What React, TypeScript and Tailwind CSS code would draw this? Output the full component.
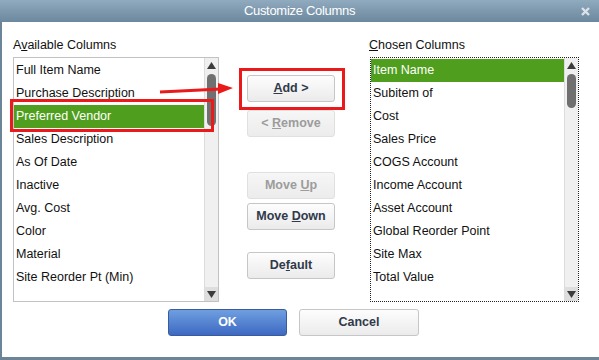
import React from 'react';

const available = [
  'Full Item Name',
  'Purchase Description',
  'Preferred Vendor',
  'Sales Description',
  'As Of Date',
  'Inactive',
  'Avg. Cost',
  'Color',
  'Material',
  'Site Reorder Pt (Min)',
];

const chosen = [
  'Item Name',
  'Subitem of',
  'Cost',
  'Sales Price',
  'COGS Account',
  'Income Account',
  'Asset Account',
  'Global Reorder Point',
  'Site Max',
  'Total Value',
];

// fake scrollbar, thumb offset/height in px
const ScrollBar: React.FC<{ thumbTop: number; thumbH: number }> = ({ thumbTop, thumbH }) => (
  <div className="w-[14px] h-full bg-[#f0f0f0] border-l border-[#dcdcdc] flex flex-col items-center">
    <div className="h-[14px] w-full flex items-center justify-center">
      <svg width="9" height="7" viewBox="0 0 9 7"><polygon points="4.5,0 9,7 0,7" fill="#3c3c3c" /></svg>
    </div>
    <div className="flex-1 w-full flex flex-col items-center">
      <div className="w-[9px] rounded-[5px] bg-[#707070]" style={{ marginTop: thumbTop, height: thumbH }} />
    </div>
    <div className="h-[14px] w-full flex items-center justify-center bg-[#dedede]">
      <svg width="9" height="7" viewBox="0 0 9 7"><polygon points="0,0 9,0 4.5,7" fill="#3c3c3c" /></svg>
    </div>
  </div>
);

const ListBox: React.FC<{ items: string[]; selected: number; focused?: boolean; thumbTop: number; thumbH: number }> = ({
  items,
  selected,
  focused,
  thumbTop,
  thumbH,
}) => (
  <div
    className={
      focused
        ? 'h-[245px] flex bg-white border border-dotted border-[#222]'
        : 'h-[245px] flex bg-white border border-[#c2c2c2]'
    }
  >
    <div className="flex-1 pt-[1px] overflow-hidden">
      {items.map((it, i) => (
        <div
          key={it}
          className={
            i === selected
              ? 'h-[23px] leading-[23px] pl-[2px] bg-[#4f9e1d] text-white whitespace-nowrap'
              : 'h-[23px] leading-[23px] pl-[2px] text-[#111] whitespace-nowrap'
          }
        >
          {it}
        </div>
      ))}
    </div>
    <ScrollBar thumbTop={thumbTop} thumbH={thumbH} />
  </div>
);

const Btn: React.FC<{ children: React.ReactNode; disabled?: boolean }> = ({ children, disabled }) => (
  <div
    className={
      disabled
        ? 'h-[27px] w-[88px] flex items-center justify-center rounded-[3px] border border-[#e0e0e0] bg-gradient-to-b from-[#f6f6f6] to-[#ececec] text-[#9c9c9c] font-bold'
        : 'h-[27px] w-[88px] flex items-center justify-center rounded-[3px] border border-[#c6c6c6] bg-gradient-to-b from-[#fdfdfd] to-[#ebebeb] text-[#303a4a] font-bold'
    }
  >
    <span className="whitespace-pre">{children}</span>
  </div>
);

export default function App() {
  return (
    <div
      className="relative w-[599px] h-[360px] flex flex-col bg-white text-[12.5px]"
      style={{ fontFamily: '"Liberation Sans", Arial, sans-serif' }}
    >
      {/* title bar */}
      <div className="h-[22px] shrink-0 flex items-center justify-center bg-gradient-to-b from-[#90aabe] to-[#6c889e] text-white text-[13px] relative">
        <span className="tracking-[-0.3px]">Customize Columns</span>
        <svg className="absolute right-[9px] top-[7px]" width="9" height="9" viewBox="0 0 9 9">
          <path d="M1 1 L8 8 M8 1 L1 8" stroke="#dbe2e8" strokeWidth="2.4" />
        </svg>
      </div>

      <div className="flex-1 flex flex-col border-l-2 border-b-[3px] border-[#6b8498]">
        <div className="flex pl-[11px] pt-[14px]">
          {/* left column */}
          <div className="w-[206px] flex flex-col">
            <div className="h-[21px] text-[#111]">
              A<span className="underline">v</span>ailable Columns
            </div>
            <ListBox items={available} selected={2} thumbTop={2} thumbH={52} />
          </div>

          {/* middle buttons */}
          <div className="w-[88px] ml-[28px] pt-[39px] flex flex-col">
            <Btn>
              <span className="underline">A</span>dd &gt;
            </Btn>
            <div className="h-[8px]" />
            <Btn disabled>
              {'< '}<span className="underline">R</span>emove
            </Btn>
            <div className="h-[35px]" />
            <Btn disabled>
              {'Move '}<span className="underline">U</span>p
            </Btn>
            <div className="h-[4px]" />
            <Btn>
              {'Move '}<span className="underline">D</span>own
            </Btn>
            <div className="h-[22px]" />
            <Btn>
              De<span className="underline">f</span>ault
            </Btn>
          </div>

          {/* right column */}
          <div className="w-[209px] ml-[35px] flex flex-col">
            <div className="h-[21px] text-[#111] -ml-[1px]">
              <span className="underline">C</span>hosen Columns
            </div>
            <ListBox items={chosen} selected={0} focused thumbTop={2} thumbH={34} />
          </div>
        </div>

        {/* bottom buttons */}
        <div className="flex pl-[166px] pt-[7px] gap-[12px]">
          <div className="h-[27px] w-[119px] flex items-center justify-center rounded-[3px] border border-[#3a5c9e] bg-gradient-to-b from-[#6f9fe0] to-[#3e69c2] text-white font-bold">
            OK
          </div>
          <div className="h-[27px] w-[120px] flex items-center justify-center rounded-[3px] border border-[#c6c6c6] bg-gradient-to-b from-[#fdfdfd] to-[#ebebeb] text-[#303a4a] font-bold">
            Cancel
          </div>
        </div>
      </div>

      {/* red annotations */}
      <div className="absolute left-[10px] top-[99px] w-[204px] h-[33px] border-[3px] border-[#ea1a1a]" />
      <div className="absolute left-[239px] top-[68px] w-[106px] h-[42px] border-[3px] border-[#ea1a1a]" />
      <svg className="absolute left-[155px] top-[78px]" width="85" height="20" viewBox="0 0 85 20">
        <line x1="5" y1="14" x2="66" y2="11" stroke="#ea1a1a" strokeWidth="3" />
        <polygon points="63,5 78,10 63,16" fill="#ea1a1a" />
      </svg>
    </div>
  );
}
